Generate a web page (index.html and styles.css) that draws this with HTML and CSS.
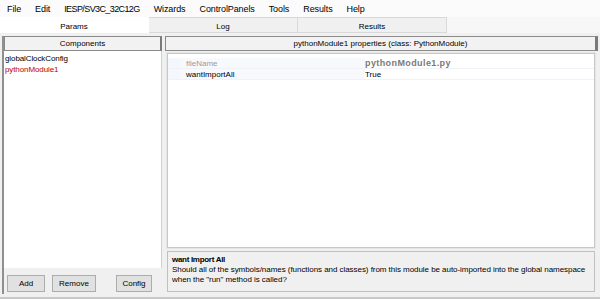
FILE: index.html
```html
<!DOCTYPE html>
<html lang="en">

<head>
  <meta charset="UTF-8" />
  <meta name="viewport" content="width=device-width, initial-scale=1.0" />
  <title>Params</title>
  <link rel="stylesheet" href="styles.css">
</head>

<body>
  <div class="menubar">
    <span class="menu-item">File</span>
    <span class="menu-item">Edit</span>
    <span class="menu-item menu-device">IESP/SV3C_32C12G</span>
    <span class="menu-item">Wizards</span>
    <span class="menu-item">ControlPanels</span>
    <span class="menu-item">Tools</span>
    <span class="menu-item">Results</span>
    <span class="menu-item">Help</span>
  </div>

  <div class="tabs">
    <div class="tab tab-active">Params</div>
    <div class="tab">Log</div>
    <div class="tab">Results</div>
  </div>

  <div class="page">
    <!-- left: component list -->
    <div class="side">
      <div class="panel-head">Components</div>
      <div class="comp-list">
        <div class="comp">globalClockConfig</div>
        <div class="comp comp-sel">pythonModule1</div>
      </div>
      <div class="side-btns">
        <button class="btn btn-add">Add</button>
        <button class="btn btn-remove">Remove</button>
        <button class="btn btn-config">Config</button>
      </div>
    </div>

    <!-- right: property grid -->
    <div class="main">
      <div class="panel-head main-head">pythonModule1 properties (class: PythonModule)</div>
      <div class="grid">
        <div class="row row-ro">
          <span class="margin"></span>
          <span class="name">fileName</span>
          <span class="value">pythonModule1.py</span>
        </div>
        <div class="row">
          <span class="margin"></span>
          <span class="name">wantImportAll</span>
          <span class="value">True</span>
        </div>
      </div>
      <div class="desc">
        <div class="desc-title">want Import All</div>
        <div class="desc-text">Should all of the symbols/names (functions and classes) from this module be auto-imported into the global namespace when the "run" method is called?</div>
      </div>
    </div>
  </div>
</body>

</html>
```

FILE: styles.css
```css
* {
  box-sizing: border-box;
}

body {
  margin: 0;
  width: 600px;
  height: 299px;
  overflow: hidden;
  background: #f0f0f0;
  color: #000;
  font-family: "Liberation Sans", Arial, sans-serif;
  font-size: 8px;
}

.menubar {
  display: flex;
  height: 17px;
  align-items: center;
  padding-left: 7px;
  background: #fbfbfb;
  font-size: 9px;
  letter-spacing: -0.1px;
}

.menu-item {
  margin-right: 14px;
}

.menu-device {
  letter-spacing: -0.6px;
}

.tabs {
  display: flex;
  height: 16px;
  background: #f7f7f7;
}

.tab {
  width: 149px;
  display: flex;
  align-items: center;
  justify-content: center;
  border: 1px solid #d9d9d9;
  border-left: none;
  background: #f0f0f0;
  padding-top: 2px;
}

.tab-active {
  background: #fff;
  border-color: #fff;
}

.page {
  display: flex;
  height: 266px;
  padding: 3px 2px 3px 2px;
  gap: 3px;
  border-bottom: 2px solid #c8c8c8;
}

.side {
  width: 160px;
  display: flex;
  flex-direction: column;
  border-left: 2px solid #8f8f8f;
}

.panel-head {
  height: 15px;
  display: flex;
  align-items: center;
  justify-content: center;
  border: 1px solid #8a8a8a;
  border-right: 2px solid #7a7a7a;
  background: #f2f2f2;
}

.comp-list {
  flex: 0 0 217px;
  background: #fff;
  padding: 2px 1px;
  border-right: 1px solid #d0d0d0;
  letter-spacing: -0.1px;
}

.comp {
  height: 11px;
  line-height: 11px;
}

.comp-sel {
  color: #c00000;
}

.side-btns {
  display: flex;
  padding: 7px 0 0 3px;
}

.btn {
  height: 17px;
  font-family: inherit;
  font-size: 8px;
  background: #e1e1e1;
  border: 1px solid #adadad;
  padding: 0;
}

.btn-add {
  width: 38px;
}

.btn-remove {
  width: 44px;
  margin-left: 7px;
}

.btn-config {
  width: 36px;
  margin-left: 20px;
}

.main {
  flex: 1;
  display: flex;
  flex-direction: column;
}

.main-head {
  border-right: 3px solid #7a7a7a;
}

.grid {
  flex: 0 0 195px;
  margin: 2px 3px 0 2px;
  background: #fff;
  border: 1px solid #c8c8c8;
  box-shadow: 0 0 0 1px #e6e6e6;
  padding-top: 4px;
}

.row {
  display: flex;
  height: 11px;
  line-height: 11px;
  border-bottom: 1px solid #f0f2f8;
}

.margin {
  width: 12px;
  background: #f4f7fc;
}

.name {
  width: 185px;
  padding-left: 6px;
  background: #f7f9fd;
}

.value {
  flex: 1;
  padding-left: 0;
}

.row-ro .name {
  color: #9a9a9a;
}

.row-ro .value {
  color: #7a7a7a;
  font-weight: bold;
  font-size: 9px;
  letter-spacing: 0.4px;
}

.desc {
  flex: 1;
  margin: 3px 3px 2px 2px;
  padding: 3px 4px;
  border: 1px solid #c0c0c0;
  background: #f0f0f0;
  line-height: 10px;
}

.desc-title {
  font-weight: bold;
  letter-spacing: -0.3px;
}

.desc-text {
  letter-spacing: -0.05px;
}
```
